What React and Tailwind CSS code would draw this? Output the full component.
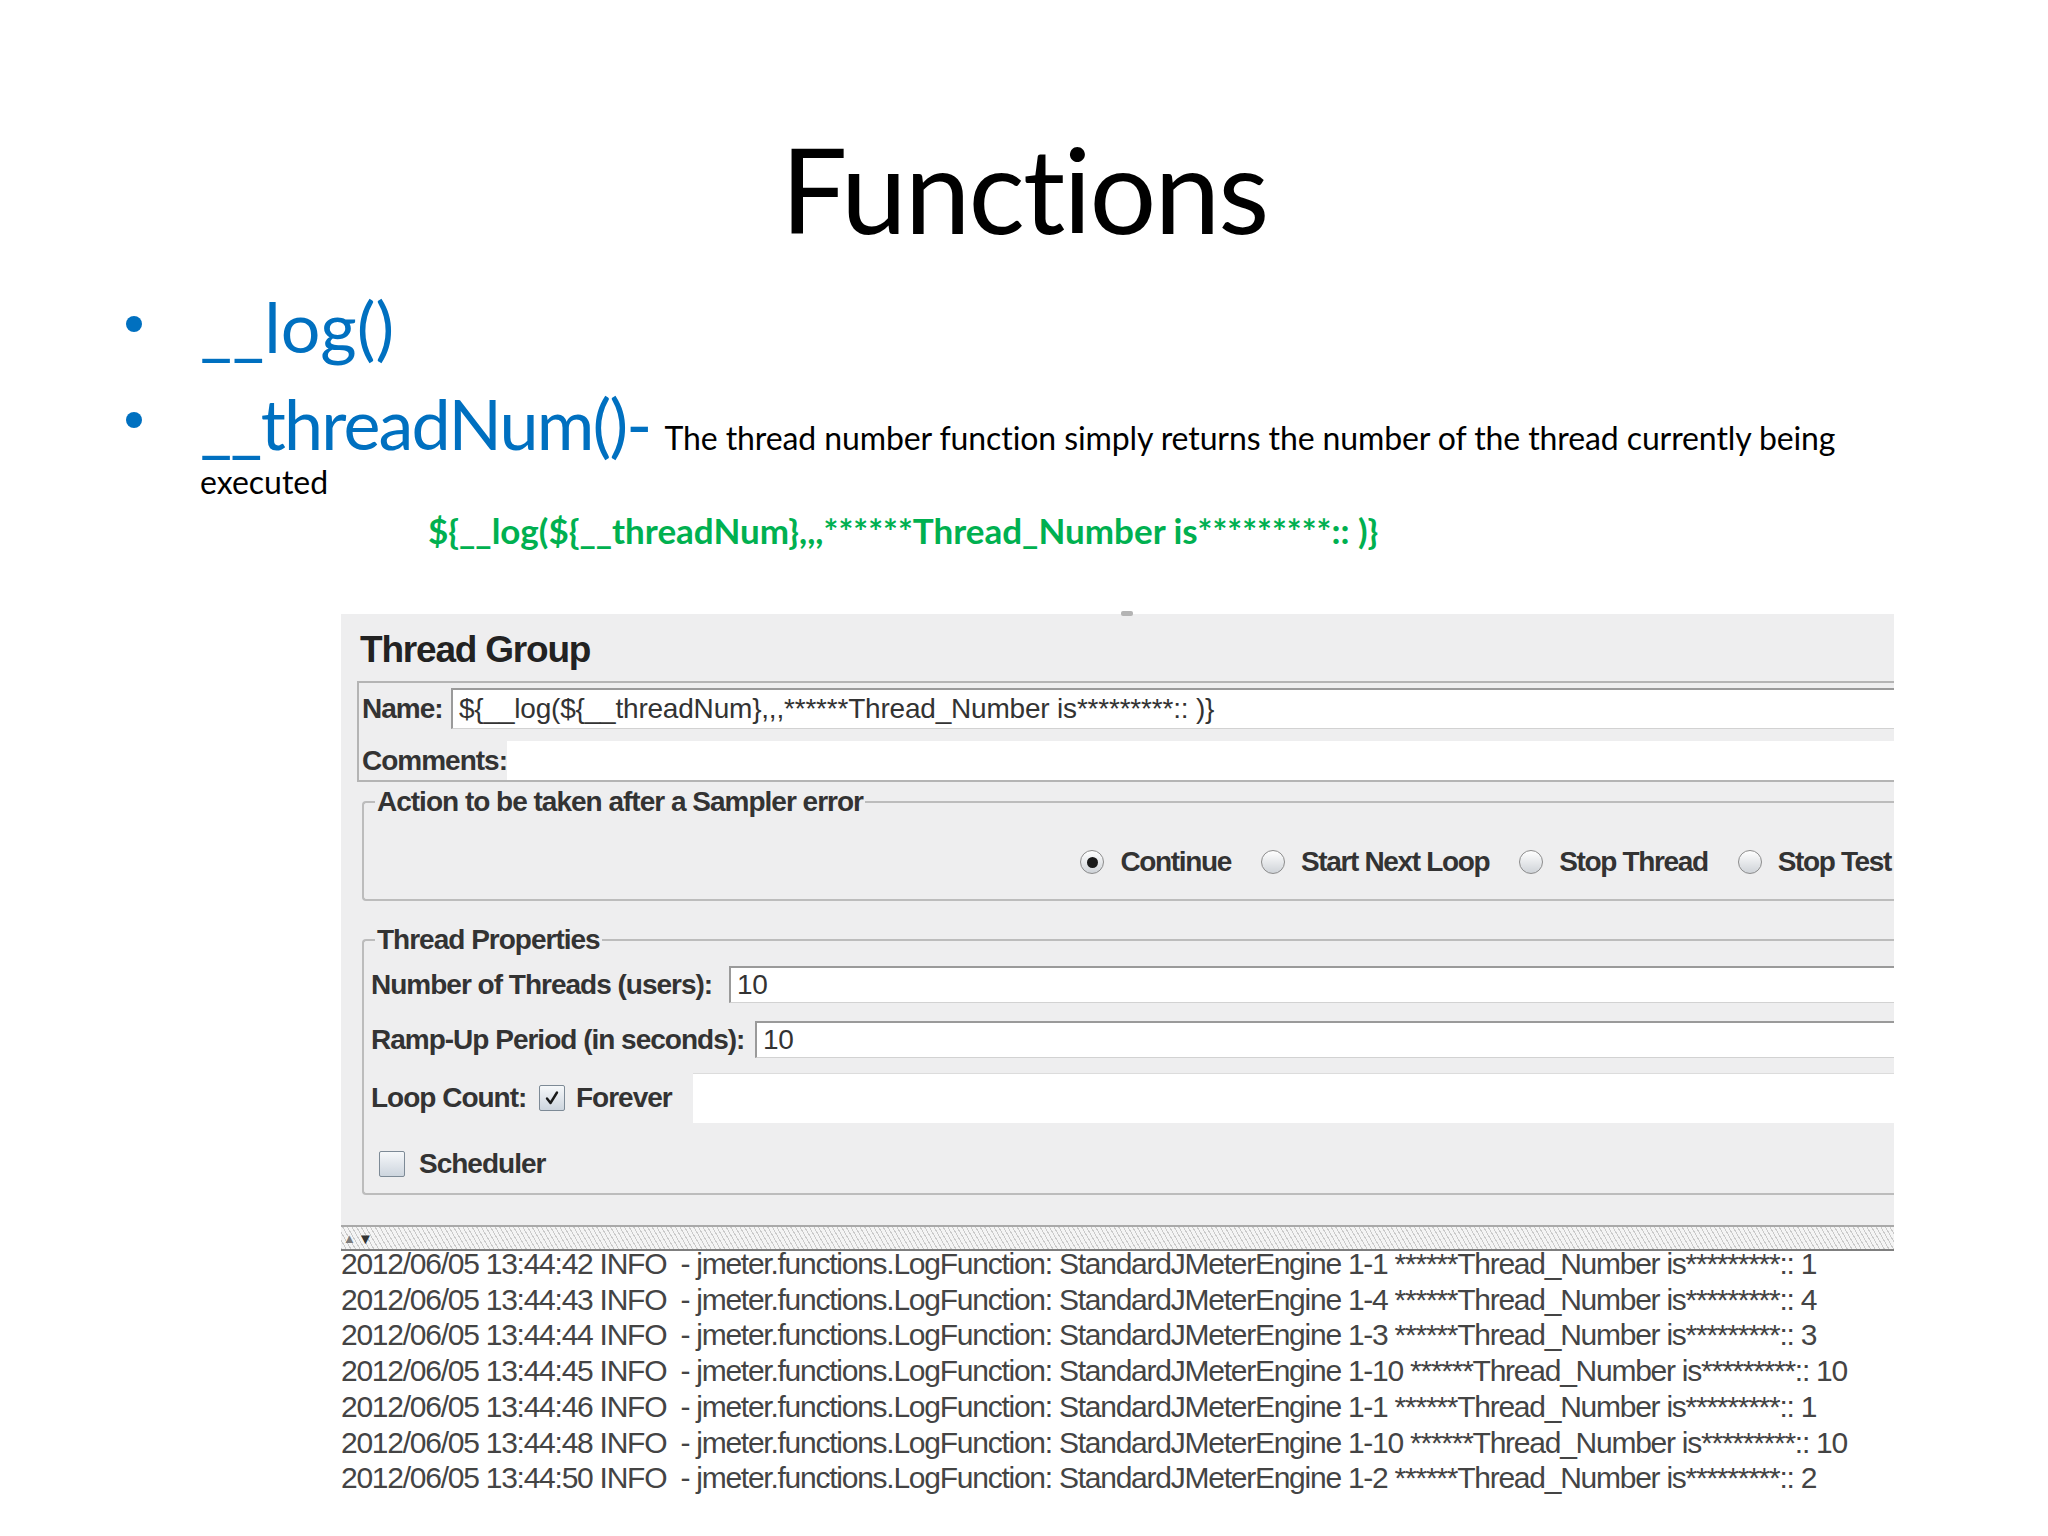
const LOGS = [
  ["42", "1-1", "1"],
  ["43", "1-4", "4"],
  ["44", "1-3", "3"],
  ["45", "1-10", "10"],
  ["46", "1-1", "1"],
  ["48", "1-10", "10"],
  ["50", "1-2", "2"],
];

const lbl = "text-[28px] leading-none font-bold tracking-[-1px] text-[#333333] whitespace-nowrap";

function Radio({ checked, label }) {
  return (
    <div className="flex items-center">
      <span className="w-[24px] h-[24px] rounded-full border border-[#8c8c8c] bg-[linear-gradient(180deg,#ffffff,#cfd3d8)] flex items-center justify-center">
        {checked && <span className="w-[11px] h-[11px] rounded-full bg-[#1a1a1a]" />}
      </span>
      <span className="ml-[16px] text-[28px] leading-none font-bold tracking-[-1.35px] text-[#333333] whitespace-nowrap">{label}</span>
    </div>
  );
}

function Check({ checked }) {
  return (
    <span className="w-[26px] h-[26px] rounded-[2px] border border-[#7d8a96] bg-[linear-gradient(180deg,#f6f8fa,#cdd5de)] flex items-center justify-center shrink-0">
      {checked && (
        <svg width="18" height="18" viewBox="0 0 18 18">
          <path d="M4 9.5 L7.5 14 L14 3.5" fill="none" stroke="#1a1a1a" strokeWidth="2.4" strokeLinecap="round" strokeLinejoin="round" />
        </svg>
      )}
    </span>
  );
}

function Field({ value, className = "" }) {
  return (
    <div className={"flex-1 h-full bg-white border-t-2 border-l-2 border-[#9a9a9a] border-b border-b-[#d2d2d2] flex items-center pl-[6px] text-[28px] leading-none tracking-[-0.2px] text-[#333333] whitespace-pre " + className}>
      {value}
    </div>
  );
}

export default function App() {
  return (
    <div className="w-[2048px] h-[1536px] bg-white overflow-hidden font-['Lato',sans-serif] text-black">
      <h1 className="pt-[130px] h-[248px] text-center text-[118px] leading-none tracking-[-2px] font-normal text-black">
        Functions
      </h1>

      <div className="mt-[43px] flex items-start h-[70px]">
        <div className="ml-[126px] mt-[25px] w-[16px] h-[16px] rounded-full bg-[#0070c0]" />
        <div className="ml-[58px] text-[70px] leading-none text-[#0070c0]">__log()</div>
      </div>

      <div className="mt-[27px] flex items-start h-[70px]">
        <div className="ml-[126px] mt-[24px] w-[16px] h-[16px] rounded-full bg-[#0070c0]" />
        <div className="ml-[58px] text-[70px] leading-[70px] whitespace-nowrap">
          <span className="text-[#0070c0] tracking-[-1.8px]">__threadNum()-</span>
          <span className="ml-[14px] text-[32px] leading-none text-black tracking-[-0.1px]">
            The thread number function simply returns the number of the thread currently being
          </span>
        </div>
      </div>

      <div className="mt-[8px] ml-[200px] text-[32px] leading-none text-black">executed</div>

      <div className="mt-[15px] ml-[428px] text-[35px] leading-none font-bold text-[#00b050] whitespace-pre">
        {"${__log(${__threadNum},,,******Thread_Number is*********:: )}"}
      </div>

      <div className="mt-[66px] ml-[341px] w-[1553px] relative font-['Liberation_Sans',Arial,sans-serif]">
        <div className="absolute top-[-3px] left-[780px] w-[12px] h-[5px] rounded-[2px] bg-[#b4b4b4]" />

        <div className="bg-[#eeeeef] pt-[17px] pb-[30px] border-b-2 border-[#a9a9a9]">
          <div className="ml-[19px] text-[37px] leading-none font-bold tracking-[-1.2px] text-[#222222]">
            Thread Group
          </div>

          <div className="mt-[13px] ml-[16px] border-t-2 border-l-2 border-b-2 border-[#b4b4b4] pl-[3px] pt-[5px]">
            <div className="flex items-center h-[41px]">
              <span className={"w-[89px] " + lbl}>Name:</span>
              <Field value={"${__log(${__threadNum},,,******Thread_Number is*********:: )}"} />
            </div>
            <div className="mt-[12px] flex items-center h-[39px]">
              <span className={"w-[145px] " + lbl}>Comments:</span>
              <div className="flex-1 h-full bg-white" />
            </div>
          </div>

          <fieldset className="mt-[6px] ml-[21px] border-2 border-r-0 border-[#bcbcbc] rounded-l-[4px] pb-[17px] min-w-0">
            <legend className={"ml-[11px] px-[2px] " + lbl}>Action to be taken after a Sampler error</legend>
            <div className="mt-[26px] h-[40px] flex items-center justify-end gap-[30px] pr-[3px]">
              <Radio checked label="Continue" />
              <Radio label="Start Next Loop" />
              <Radio label="Stop Thread" />
              <Radio label="Stop Test" />
            </div>
          </fieldset>

          <fieldset className="mt-[25px] ml-[21px] border-2 border-r-0 border-[#bcbcbc] rounded-l-[4px] pl-[7px] pb-[15px] min-w-0">
            <legend className={"ml-[4px] px-[2px] " + lbl}>Thread Properties</legend>
            <div className="mt-[12px] flex items-center h-[37px]">
              <span className={"w-[358px] " + lbl}>Number of Threads (users):</span>
              <Field value="10" />
            </div>
            <div className="mt-[18px] flex items-center h-[37px]">
              <span className={"w-[384px] " + lbl}>Ramp-Up Period (in seconds):</span>
              <Field value="10" />
            </div>
            <div className="mt-[15px] flex items-center h-[50px]">
              <span className={"w-[168px] " + lbl}>Loop Count:</span>
              <Check checked />
              <span className={"ml-[11px] w-[117px] " + lbl}>Forever</span>
              <div className="flex-1 h-full bg-white border-t border-[#dcdcdc]" />
            </div>
            <div className="mt-[27px] flex items-center h-[28px]">
              <span className="ml-[8px]"><Check /></span>
              <span className={"ml-[14px] " + lbl}>Scheduler</span>
            </div>
          </fieldset>
        </div>

        <div className="h-[24px] border-b-2 border-[#7f7f7f] bg-[#f4f4f4] bg-[image:repeating-linear-gradient(60deg,#cacaca_0px,#cacaca_1px,transparent_1px,transparent_4px)] flex items-center pl-[2px] gap-[2px]">
          <span className="text-[13px] leading-none text-[#7a7a7a]">▲</span>
          <span className="text-[15px] leading-none text-[#333333]">▼</span>
        </div>

        <div className="-mt-[5px] relative text-[30px] leading-[35.7px] tracking-[-1.25px] text-[#444444] whitespace-pre">
          {LOGS.map(([s, t, n], i) => (
            <div key={i}>
              {`2012/06/05 13:44:${s} INFO  - jmeter.functions.LogFunction: StandardJMeterEngine ${t} ******Thread_Number is*********:: ${n}`}
            </div>
          ))}
        </div>
      </div>
    </div>
  );
}
